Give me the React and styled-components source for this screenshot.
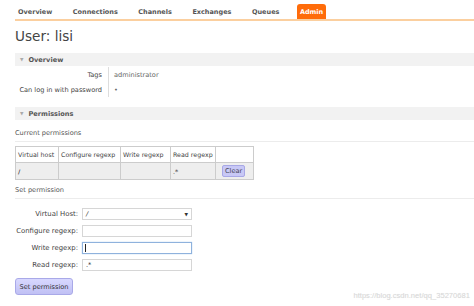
import React, { useState } from 'react';
import styled, { createGlobalStyle } from 'styled-components';

const GlobalStyle = createGlobalStyle`
  html, body {
    margin: 0;
    padding: 0;
    background: #fff;
  }
  body {
    font-family: "DejaVu Sans", Verdana, sans-serif;
    font-size: 6.6px;
    color: #484848;
  }
`

const tabs = ["Overview", "Connections", "Channels", "Exchanges", "Queues", "Admin"]
const columns = [
  { label: "Virtual host", width: 43 },
  { label: "Configure regexp", width: 62 },
  { label: "Write regexp", width: 50 },
  { label: "Read regexp", width: 45 },
  { label: "", width: 38 },
]

const Page = styled.div`
  width: 474px;
  height: 306px;
  overflow: hidden;
  padding-left: 15px;
  box-sizing: border-box;
  position: relative;
`

const Nav = styled.div`
  display: flex;
  gap: 14.5px;
  height: 15px;
  padding-top: 4px;
  border-bottom: 2px solid #fbcf9f;
`

const Tab = styled.div`
  display: flex;
  align-items: center;
  padding: 0 3px;
  font-weight: bold;
  font-size: 6.5px;
  color: ${p => (p.$active ? '#fff' : '#555')};
  background: ${p => (p.$active ? '#ff6c0a' : 'transparent')};
  border-radius: 3px 3px 0 0;
  cursor: pointer;
`

const Title = styled.h1`
  margin: 7px 0 0;
  font-weight: normal;
  font-size: 13.6px;
  line-height: 16px;
  color: #444;
`

const SectionHeader = styled.div`
  display: flex;
  align-items: center;
  gap: 5px;
  height: 13px;
  margin-top: ${p => p.$top}px;
  padding-left: 5px;
  background: #f2f2f2;
  font-weight: bold;
  color: #555;

  .arrow {
    font-size: 4.5px;
    color: #aaa;
  }
`

const Facts = styled.div`
  display: grid;
  grid-template-columns: 94px auto;
  margin-top: 1px;
  width: 200px;
`

const FactKey = styled.div`
  height: 15px;
  display: flex;
  align-items: center;
  justify-content: flex-end;
  padding-right: 6px;
  border-right: 1px solid #ddd;
  box-sizing: border-box;
  color: #444;
`

const FactValue = styled.div`
  height: 15px;
  display: flex;
  align-items: center;
  padding-left: 5px;
  color: #666;
`

const SubTitle = styled.h3`
  margin: ${p => p.$top}px 0 0;
  height: 15px;
  line-height: 12px;
  font-weight: normal;
  font-size: 6.6px;
  color: #555;
  border-bottom: 1px solid #ececec;
  box-sizing: border-box;
`

const Table = styled.table`
  margin-top: 4px;
  border-collapse: collapse;
  table-layout: fixed;
  width: 238px;

  th, td {
    border: 1px solid #ccc;
    padding: 0 2px;
    text-align: left;
    font-weight: normal;
    color: #444;
    white-space: nowrap;
    overflow: hidden;
    font-size: 6.3px;
  }
  th {
    height: 15px;
    background: #fff;
  }
  td {
    height: 16px;
    background: #eee;
  }
`

const SmallButton = styled.button`
  font-family: inherit;
  font-size: 6.6px;
  padding: 0 2px;
  height: 12px;
  margin-left: 4px;
  color: #445;
  background: #c8c8f6;
  border: 1px solid #a8a8e6;
  border-radius: 2px;
`

const Form = styled.div`
  display: flex;
  flex-direction: column;
  gap: 5px;
  margin-top: 9px;
`

const FormRow = styled.label`
  display: flex;
  align-items: center;
  gap: 4px;
  height: 12px;

  > span {
    width: 63px;
    text-align: right;
    font-size: 6.9px;
    color: #444;
    white-space: nowrap;
  }
`

const Field = styled.div`
  width: 110px;
  height: 12px;
  box-sizing: border-box;
  border: 1px solid ${p => (p.$focus ? '#8fb2dd' : '#d6d6d6')};
  box-shadow: ${p => (p.$focus ? '0 0 1px #9cc0ea' : 'none')};
  display: flex;
  align-items: center;
  justify-content: space-between;
  padding: 0 3px;
  color: #333;
  background: #fff;

  .caret {
    width: 1px;
    height: 8px;
    background: #222;
    margin-left: -1px;
  }
  .tri {
    font-size: 4.5px;
    color: #333;
  }
`

const Button = styled.button`
  margin-top: 7px;
  width: 58px;
  height: 17px;
  font-family: inherit;
  font-size: 6.6px;
  color: #333;
  background: linear-gradient(#d8d8ff, #c0c0f4);
  border: 1px solid #a9a9e8;
  border-radius: 3px;
  padding: 0;
`

const Footer = styled.div`
  margin-top: 11px;
  border-top: 1px solid #e6e6e6;
`

const Watermark = styled.div`
  position: absolute;
  right: 4px;
  bottom: 6px;
  font-family: "Liberation Sans", Arial, sans-serif;
  font-size: 7.6px;
  color: #d8d8d8;
  text-shadow: 0 0 1px #eee;
`

const App = () => {
  const [active, setActive] = useState(5);

  return (
    <Page>
      <GlobalStyle />
      <Nav>
        {tabs.map((t, i) => (
          <Tab key={t} $active={i === active} onClick={() => setActive(i)}>{t}</Tab>
        ))}
      </Nav>
      <Title>User: lisi</Title>

      <SectionHeader $top={9}><span className="arrow">▼</span>Overview</SectionHeader>
      <Facts>
        <FactKey>Tags</FactKey>
        <FactValue>administrator</FactValue>
        <FactKey>Can log in with password</FactKey>
        <FactValue>•</FactValue>
      </Facts>

      <SectionHeader $top={10}><span className="arrow">▼</span>Permissions</SectionHeader>
      <SubTitle $top={7}>Current permissions</SubTitle>
      <Table>
        <colgroup>
          {columns.map(c => <col key={c.width} style={{ width: c.width }} />)}
        </colgroup>
        <thead>
          <tr>
            {columns.map(c => <th key={c.width}>{c.label}</th>)}
          </tr>
        </thead>
        <tbody>
          <tr>
            <td><b>/</b></td>
            <td></td>
            <td></td>
            <td>.*</td>
            <td><SmallButton>Clear</SmallButton></td>
          </tr>
        </tbody>
      </Table>

      <SubTitle $top={4}>Set permission</SubTitle>
      <Form>
        <FormRow>
          <span>Virtual Host:</span>
          <Field><i>/</i><span className="tri">▼</span></Field>
        </FormRow>
        <FormRow>
          <span>Configure regexp:</span>
          <Field />
        </FormRow>
        <FormRow>
          <span>Write regexp:</span>
          <Field $focus><div className="caret" /></Field>
        </FormRow>
        <FormRow>
          <span>Read regexp:</span>
          <Field>.*<span /></Field>
        </FormRow>
      </Form>
      <Button>Set permission</Button>
      <Footer />
      <Watermark>https://blog.csdn.net/qq_35270681</Watermark>
    </Page>
  );
};

export default App;
